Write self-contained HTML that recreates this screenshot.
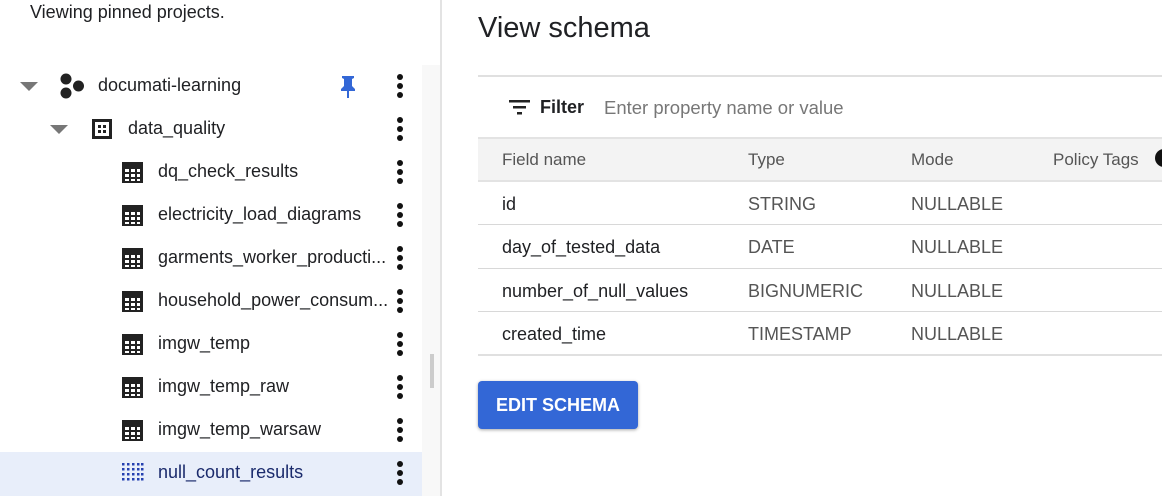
<!DOCTYPE html>
<html><head><style>
*{margin:0;padding:0;box-sizing:border-box}
body{width:1162px;height:496px;overflow:hidden;background:#fff;font-family:"Liberation Sans",sans-serif;color:#202124;position:relative}
.a{position:absolute;white-space:nowrap}
.t{font-size:18px;color:#202124}
.hr{position:absolute;left:478px;right:0;height:2px;background:#e0e0e0}
.c{position:absolute;font-size:18px;white-space:nowrap}
.g{color:#555}
</style></head><body>
<div class="a" style="left:30px;top:2px;font-size:18px;color:#202124">Viewing pinned projects.</div>
<div class="a" style="left:422px;top:65px;width:18px;height:431px;background:#f8f8f8"></div>
<div class="a" style="left:430px;top:354px;width:4px;height:34px;background:#ccc"></div>
<div class="a" style="left:440px;top:0;width:2px;height:496px;background:#e3e3e3"></div>
<div class="a" style="left:0;top:452px;width:422px;height:44px;background:#e8eefa"></div>

<svg class="a" style="left:20px;top:82px" width="18" height="10"><path d="M0 0h18L9 9z" fill="#777"/></svg>
<svg class="a" style="left:59px;top:73px" width="26" height="26"><circle cx="7" cy="6" r="5.5" fill="#222"/><circle cx="7" cy="20" r="5.5" fill="#222"/><circle cx="19.5" cy="13" r="5.5" fill="#222"/></svg>
<div class="a t" style="left:98px;top:75px">documati-learning</div>
<svg class="a" style="left:340px;top:75px" width="16" height="24"><path d="M2 1h12v2l-2 1v7l3 3v2H9v7H7v-7H1v-2l3-3V4L2 3z" fill="#3367d6"/></svg>
<svg class="a" style="left:50px;top:125px" width="18" height="10"><path d="M0 0h18L9 9z" fill="#777"/></svg>
<div class="a" style="left:92px;top:119px;width:20px;height:20px;border:3px solid #222"></div>
<div class="a" style="left:98px;top:125px;width:3px;height:3px;background:#222;box-shadow:5px 0 #222,0 5px #222,5px 5px #222"></div>
<div class="a t" style="left:128px;top:118px">data_quality</div>

<div class="a t" style="left:158px;top:161px">dq_check_results</div>
<div class="a t" style="left:158px;top:204px">electricity_load_diagrams</div>
<div class="a t" style="left:158px;top:247px">garments_worker_producti...</div>
<div class="a t" style="left:158px;top:290px">household_power_consum...</div>
<div class="a t" style="left:158px;top:333px">imgw_temp</div>
<div class="a t" style="left:158px;top:376px">imgw_temp_raw</div>
<div class="a t" style="left:158px;top:419px">imgw_temp_warsaw</div>
<div class="a t" style="left:158px;top:462px;color:#1a2a6c">null_count_results</div>

<svg class="a" style="left:0;top:0" width="420" height="496">
<defs><g id="tb"><rect width="21" height="21" fill="#222"/><g fill="#fff"><rect x="3" y="7" width="4" height="3"/><rect x="9" y="7" width="4" height="3"/><rect x="15" y="7" width="3" height="3"/><rect x="3" y="12" width="4" height="3"/><rect x="9" y="12" width="4" height="3"/><rect x="15" y="12" width="3" height="3"/><rect x="3" y="17" width="4" height="2"/><rect x="9" y="17" width="4" height="2"/><rect x="15" y="17" width="3" height="2"/></g></g></defs>
<use href="#tb" x="122" y="162"/><use href="#tb" x="122" y="205"/><use href="#tb" x="122" y="248"/><use href="#tb" x="122" y="291"/><use href="#tb" x="122" y="334"/><use href="#tb" x="122" y="377"/><use href="#tb" x="122" y="420"/>
<g fill="#2540b0">
<rect x="122" y="463" width="2.5" height="2.5"/><rect x="127" y="463" width="2.5" height="2.5"/><rect x="132" y="463" width="2.5" height="2.5"/><rect x="137" y="463" width="2.5" height="2.5"/><rect x="141" y="463" width="2.5" height="2.5"/>
<rect x="122" y="468" width="2.5" height="2.5"/><rect x="127" y="468" width="2.5" height="2.5"/><rect x="132" y="468" width="2.5" height="2.5"/><rect x="137" y="468" width="2.5" height="2.5"/><rect x="141" y="468" width="2.5" height="2.5"/>
<rect x="122" y="473" width="2.5" height="2.5"/><rect x="127" y="473" width="2.5" height="2.5"/><rect x="132" y="473" width="2.5" height="2.5"/><rect x="137" y="473" width="2.5" height="2.5"/><rect x="141" y="473" width="2.5" height="2.5"/>
<rect x="122" y="478" width="2.5" height="2.5"/><rect x="127" y="478" width="2.5" height="2.5"/><rect x="132" y="478" width="2.5" height="2.5"/><rect x="137" y="478" width="2.5" height="2.5"/><rect x="141" y="478" width="2.5" height="2.5"/>
</g>
<g fill="#111">
<circle cx="400" cy="77" r="3"/><circle cx="400" cy="86" r="3"/><circle cx="400" cy="95" r="3"/>
<circle cx="400" cy="120" r="3"/><circle cx="400" cy="129" r="3"/><circle cx="400" cy="138" r="3"/>
<circle cx="400" cy="163" r="3"/><circle cx="400" cy="172" r="3"/><circle cx="400" cy="181" r="3"/>
<circle cx="400" cy="206" r="3"/><circle cx="400" cy="215" r="3"/><circle cx="400" cy="224" r="3"/>
<circle cx="400" cy="249" r="3"/><circle cx="400" cy="258" r="3"/><circle cx="400" cy="267" r="3"/>
<circle cx="400" cy="292" r="3"/><circle cx="400" cy="301" r="3"/><circle cx="400" cy="310" r="3"/>
<circle cx="400" cy="335" r="3"/><circle cx="400" cy="344" r="3"/><circle cx="400" cy="353" r="3"/>
<circle cx="400" cy="378" r="3"/><circle cx="400" cy="387" r="3"/><circle cx="400" cy="396" r="3"/>
<circle cx="400" cy="421" r="3"/><circle cx="400" cy="430" r="3"/><circle cx="400" cy="439" r="3"/>
<circle cx="400" cy="464" r="3"/><circle cx="400" cy="473" r="3"/><circle cx="400" cy="482" r="3"/>
</g>
</svg>

<div class="a" style="left:478px;top:12px;font-size:29px;color:#202124">View schema</div>
<div class="hr" style="top:75px"></div>
<svg class="a" style="left:509px;top:100px" width="22" height="16"><rect x="0" y="0" width="21" height="2.5" fill="#222"/><rect x="4" y="6" width="13" height="2.5" fill="#222"/><rect x="8" y="12" width="5" height="2.5" fill="#222"/></svg>
<div class="c" style="left:540px;top:97px;font-weight:bold;color:#202124">Filter</div>
<div class="c" style="left:604px;top:97px;color:#777;font-size:18.5px">Enter property name or value</div>
<div class="a" style="left:478px;top:137px;right:0;height:45px;background:#f3f3f3;border-top:2px solid #e3e3e3;border-bottom:2px solid #e3e3e3"></div>
<div class="c g" style="left:502px;top:150px;font-size:17px">Field name</div>
<div class="c g" style="left:748px;top:150px;font-size:17px">Type</div>
<div class="c g" style="left:911px;top:150px;font-size:17px">Mode</div>
<div class="c g" style="left:1053px;top:150px;font-size:17px">Policy Tags</div>
<div class="a" style="left:1155px;top:149px;width:18px;height:18px;border-radius:50%;background:#111"></div>

<div class="c" style="left:502px;top:194px">id</div><div class="c g" style="left:748px;top:194px">STRING</div><div class="c g" style="left:911px;top:194px">NULLABLE</div>
<div class="hr" style="top:224px;height:1px;background:#d8d8d8"></div>
<div class="c" style="left:502px;top:237px">day_of_tested_data</div><div class="c g" style="left:748px;top:237px">DATE</div><div class="c g" style="left:911px;top:237px">NULLABLE</div>
<div class="hr" style="top:268px;height:1px;background:#d8d8d8"></div>
<div class="c" style="left:502px;top:281px">number_of_null_values</div><div class="c g" style="left:748px;top:281px">BIGNUMERIC</div><div class="c g" style="left:911px;top:281px">NULLABLE</div>
<div class="hr" style="top:311px;height:1px;background:#d8d8d8"></div>
<div class="c" style="left:502px;top:324px">created_time</div><div class="c g" style="left:748px;top:324px">TIMESTAMP</div><div class="c g" style="left:911px;top:324px">NULLABLE</div>
<div class="hr" style="top:354px"></div>

<div class="a" style="left:478px;top:381px;width:160px;height:48px;background:#3367d6;border-radius:4px;box-shadow:0 1px 3px rgba(0,0,0,.35);color:#fff;font-weight:bold;font-size:18px;text-align:center;line-height:48px">EDIT SCHEMA</div>
</body></html>
